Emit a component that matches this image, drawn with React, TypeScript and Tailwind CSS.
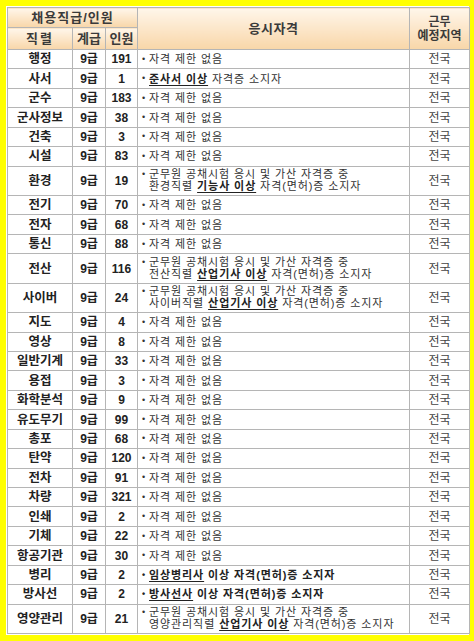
import React from "react";

type Q =
  | { kind: "none" }
  | { kind: "simple"; u: string; rest: string; allBold?: boolean }
  | { kind: "double"; job: string; u: string };

type Row = { name: string; n: string; q: Q };

const none: Q = { kind: "none" };

const rows: Row[] = [
  { name: "행정", n: "191", q: none },
  { name: "사서", n: "1", q: { kind: "simple", u: "준사서 이상", rest: " 자격증 소지자" } },
  { name: "군수", n: "183", q: none },
  { name: "군사정보", n: "38", q: none },
  { name: "건축", n: "3", q: none },
  { name: "시설", n: "83", q: none },
  { name: "환경", n: "19", q: { kind: "double", job: "환경직렬", u: "기능사 이상" } },
  { name: "전기", n: "70", q: none },
  { name: "전자", n: "68", q: none },
  { name: "통신", n: "88", q: none },
  { name: "전산", n: "116", q: { kind: "double", job: "전산직렬", u: "산업기사 이상" } },
  { name: "사이버", n: "24", q: { kind: "double", job: "사이버직렬", u: "산업기사 이상" } },
  { name: "지도", n: "4", q: none },
  { name: "영상", n: "8", q: none },
  { name: "일반기계", n: "33", q: none },
  { name: "용접", n: "3", q: none },
  { name: "화학분석", n: "9", q: none },
  { name: "유도무기", n: "99", q: none },
  { name: "총포", n: "68", q: none },
  { name: "탄약", n: "120", q: none },
  { name: "전차", n: "91", q: none },
  { name: "차량", n: "321", q: none },
  { name: "인쇄", n: "2", q: none },
  { name: "기체", n: "22", q: none },
  { name: "항공기관", n: "30", q: none },
  { name: "병리", n: "2", q: { kind: "simple", u: "임상병리사", rest: " 이상 자격(면허)증 소지자", allBold: true } },
  { name: "방사선", n: "2", q: { kind: "simple", u: "방사선사", rest: " 이상 자격(면허)증 소지자", allBold: true } },
  { name: "영양관리", n: "21", q: { kind: "double", job: "영양관리직렬", u: "산업기사 이상" } },
];

const font = { fontFamily: '"Liberation Sans", "Noto Sans CJK KR", sans-serif' };

function Bullet() {
  return <span className="w-[7px] shrink-0 text-[9px] leading-[11px]">•</span>;
}

function Qual({ q }: { q: Q }) {
  if (q.kind === "none") {
    return (
      <div className="flex items-center">
        <Bullet />
        <span>자격 제한 없음</span>
      </div>
    );
  }
  if (q.kind === "simple") {
    return (
      <div className={"flex items-center " + (q.allBold ? "font-bold text-[#222]" : "")}>
        <Bullet />
        <span>
          <span className="font-bold underline underline-offset-2 text-[#222]">{q.u}</span>
          {q.rest}
        </span>
      </div>
    );
  }
  return (
    <div className="flex leading-[11.5px]">
      <Bullet />
      <div className="flex flex-col">
        <span>군무원 공채시험 응시 및 가산 자격증 중</span>
        <span>
          {q.job} <span className="font-bold underline underline-offset-2 text-[#222]">{q.u}</span> 자격(면허)증 소지자
        </span>
      </div>
    </div>
  );
}

export default function App() {
  const th =
    "border border-[#b5b5b5] bg-linear-to-b from-[#fff6ea] to-[#f8d6a8] font-bold text-[#3a3a3a] text-center p-0 leading-[14px]";
  const td = "border border-[#b5b5b5] p-0 text-center leading-[14px]";
  return (
    <div className="w-[474px] h-[641px] bg-[#ffff00] pt-[6px] pl-[6px] pr-[5px] pb-[6px] overflow-hidden" style={font}>
      <div className="bg-white pl-[1px] pt-[1px] w-[463px] h-[629px]">
        <table className="border-collapse table-fixed w-[462px] border border-[#8c8c8c]">
          <colgroup>
            <col className="w-[65px]" />
            <col className="w-[33px]" />
            <col className="w-[32px]" />
            <col className="w-[272px]" />
            <col className="w-[60px]" />
          </colgroup>
          <thead>
            <tr className="h-[20px]">
              <th colSpan={3} className={th + " text-[13px] tracking-[1px]"}>
                채용직급/인원
              </th>
              <th rowSpan={2} className={th + " text-[13px] tracking-[0.5px]"}>
                응시자격
              </th>
              <th rowSpan={2} className={th + " text-[12px] leading-[13px]"}>
                근무
                <br />
                예정지역
              </th>
            </tr>
            <tr className="h-[22px]">
              <th className={th + " text-[13px] tracking-[2px]"}>직렬</th>
              <th className={th + " text-[13px]"}>계급</th>
              <th className={th + " text-[13px]"}>인원</th>
            </tr>
          </thead>
          <tbody>
            {rows.map((r) => (
              <tr key={r.name} className={r.q.kind === "double" ? "h-[29.4px]" : "h-[19.45px]"}>
                <td className={td + " font-bold text-[12.5px] text-[#222]"}>{r.name}</td>
                <td className={td + " font-bold text-[12px] text-[#222]"}>9급</td>
                <td className={td + " font-bold text-[12px] text-[#222]"}>{r.n}</td>
                <td className="border border-[#b5b5b5] py-0 pl-[4px] pr-0 text-left text-[11px] leading-[12px] tracking-[0.9px] text-[#333]">
                  <Qual q={r.q} />
                </td>
                <td className={td + " text-[12px] text-[#444]"}>전국</td>
              </tr>
            ))}
          </tbody>
        </table>
      </div>
    </div>
  );
}
